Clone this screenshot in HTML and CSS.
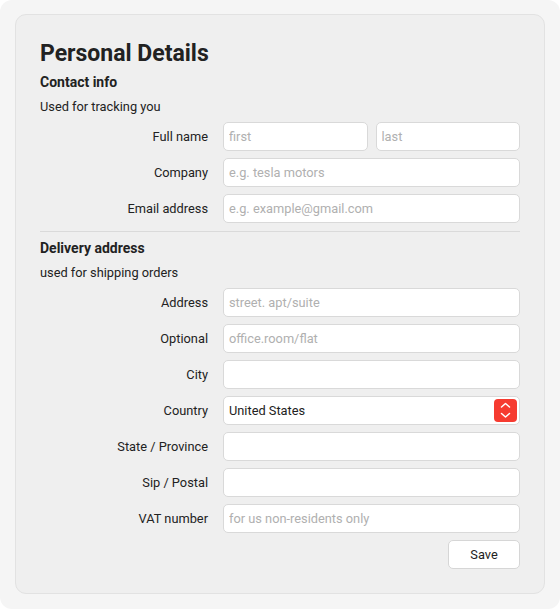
FILE: index.html
```html
<!DOCTYPE html>
<html lang="en">
<head>
<meta charset="utf-8">
<title>Personal Details</title>
<link rel="stylesheet" href="styles.css">
</head>
<body>
<div class="wrap">
  <form class="card">
    <h1 class="title">Personal Details</h1>

    <h2 class="section-title">Contact info</h2>
    <p class="section-desc">Used for tracking you</p>
    <div class="rows">
      <label class="lbl">Full name</label>
      <div class="pair">
        <input class="field" type="text" placeholder="first">
        <input class="field" type="text" placeholder="last">
      </div>
      <label class="lbl">Company</label>
      <input class="field" type="text" placeholder="e.g. tesla motors">
      <label class="lbl">Email address</label>
      <input class="field" type="text" placeholder="e.g. example@gmail.com">
    </div>

    <hr class="divider">

    <h2 class="section-title">Delivery address</h2>
    <p class="section-desc">used for shipping orders</p>
    <div class="rows">
      <label class="lbl">Address</label>
      <input class="field" type="text" placeholder="street. apt/suite">
      <label class="lbl">Optional</label>
      <input class="field" type="text" placeholder="office.room/flat">
      <label class="lbl">City</label>
      <input class="field" type="text">
      <label class="lbl">Country</label>
      <div class="select">
        <span class="select-value">United States</span>
        <span class="select-btn">
          <svg width="23" height="23" viewBox="0 0 23 23">
            <path d="M7.5 8 L11.5 4.5 L15.5 8" fill="none" stroke="#fff" stroke-width="1.5" stroke-linecap="round" stroke-linejoin="round"/>
            <path d="M7.5 14.5 L11.5 18 L15.5 14.5" fill="none" stroke="#fff" stroke-width="1.5" stroke-linecap="round" stroke-linejoin="round"/>
          </svg>
        </span>
      </div>
      <label class="lbl">State / Province</label>
      <input class="field" type="text">
      <label class="lbl">Sip / Postal</label>
      <input class="field" type="text">
      <label class="lbl">VAT number</label>
      <input class="field" type="text" placeholder="for us non-residents only">
    </div>
    <div class="actions">
      <button class="btn" type="button">Save</button>
    </div>
  </form>
</div>
</body>
</html>
```

FILE: styles.css
```css
html {
  background: #ffffff;
}
body {
  margin: 0;
  font-family: Roboto, "Liberation Sans", sans-serif;
  color: #222;
}
.wrap {
  width: 560px;
  height: 609px;
  box-sizing: border-box;
  background: #f5f5f5;
  border-radius: 12px;
  padding: 14px 15px 0 15px;
}
.card {
  box-sizing: border-box;
  width: 530px;
  height: 580px;
  background: #efefef;
  border: 1px solid #e2e2e2;
  border-radius: 11px;
  padding: 24px 24px 24px 24px;
}
.title {
  margin: 1px 0 0;
  font-size: 23px;
  line-height: 28px;
  font-weight: 700;
  color: #222;
}
.section-title {
  margin: 4px 0 0;
  font-size: 14px;
  line-height: 20px;
  font-weight: 700;
  color: #222;
}
.section-desc {
  margin: 6px 0 0;
  font-size: 12.8px;
  line-height: 18px;
  color: #222;
}
.rows {
  margin-top: 6px;
  display: grid;
  grid-template-columns: 168px 1fr;
  column-gap: 15px;
  row-gap: 7px;
  align-items: center;
}
.lbl {
  text-align: right;
  font-size: 12.8px;
  color: #222;
}
.pair {
  display: grid;
  grid-template-columns: 1fr 1fr;
  column-gap: 8px;
}
.field,
.select {
  box-sizing: border-box;
  height: 29px;
  width: 100%;
  background: #fff;
  border: 1px solid #d9d9d9;
  border-radius: 5px;
  padding: 0 5px;
  font-family: Roboto, "Liberation Sans", sans-serif;
  font-size: 12.8px;
  color: #222;
  outline: none;
}
.field::placeholder {
  color: #b0b0b0;
}
.select {
  display: flex;
  align-items: center;
  justify-content: space-between;
  padding-right: 2px;
}
.select-value {
  font-size: 12.8px;
  color: #222;
}
.select-btn {
  width: 23px;
  height: 23px;
  background: #f63b30;
  border-radius: 4px;
  display: flex;
}
.divider {
  margin: 8px 0 0;
  border: 0;
  border-top: 1px solid #dadada;
  height: 0;
}
.divider + .section-title {
  margin-top: 6px;
}
.actions {
  display: flex;
  justify-content: flex-end;
  margin-top: 7px;
}
.btn {
  box-sizing: border-box;
  width: 72px;
  height: 29px;
  background: #fff;
  border: 1px solid #d6d6d6;
  border-radius: 5px;
  font-family: Roboto, "Liberation Sans", sans-serif;
  font-size: 12.8px;
  color: #222;
}
```
